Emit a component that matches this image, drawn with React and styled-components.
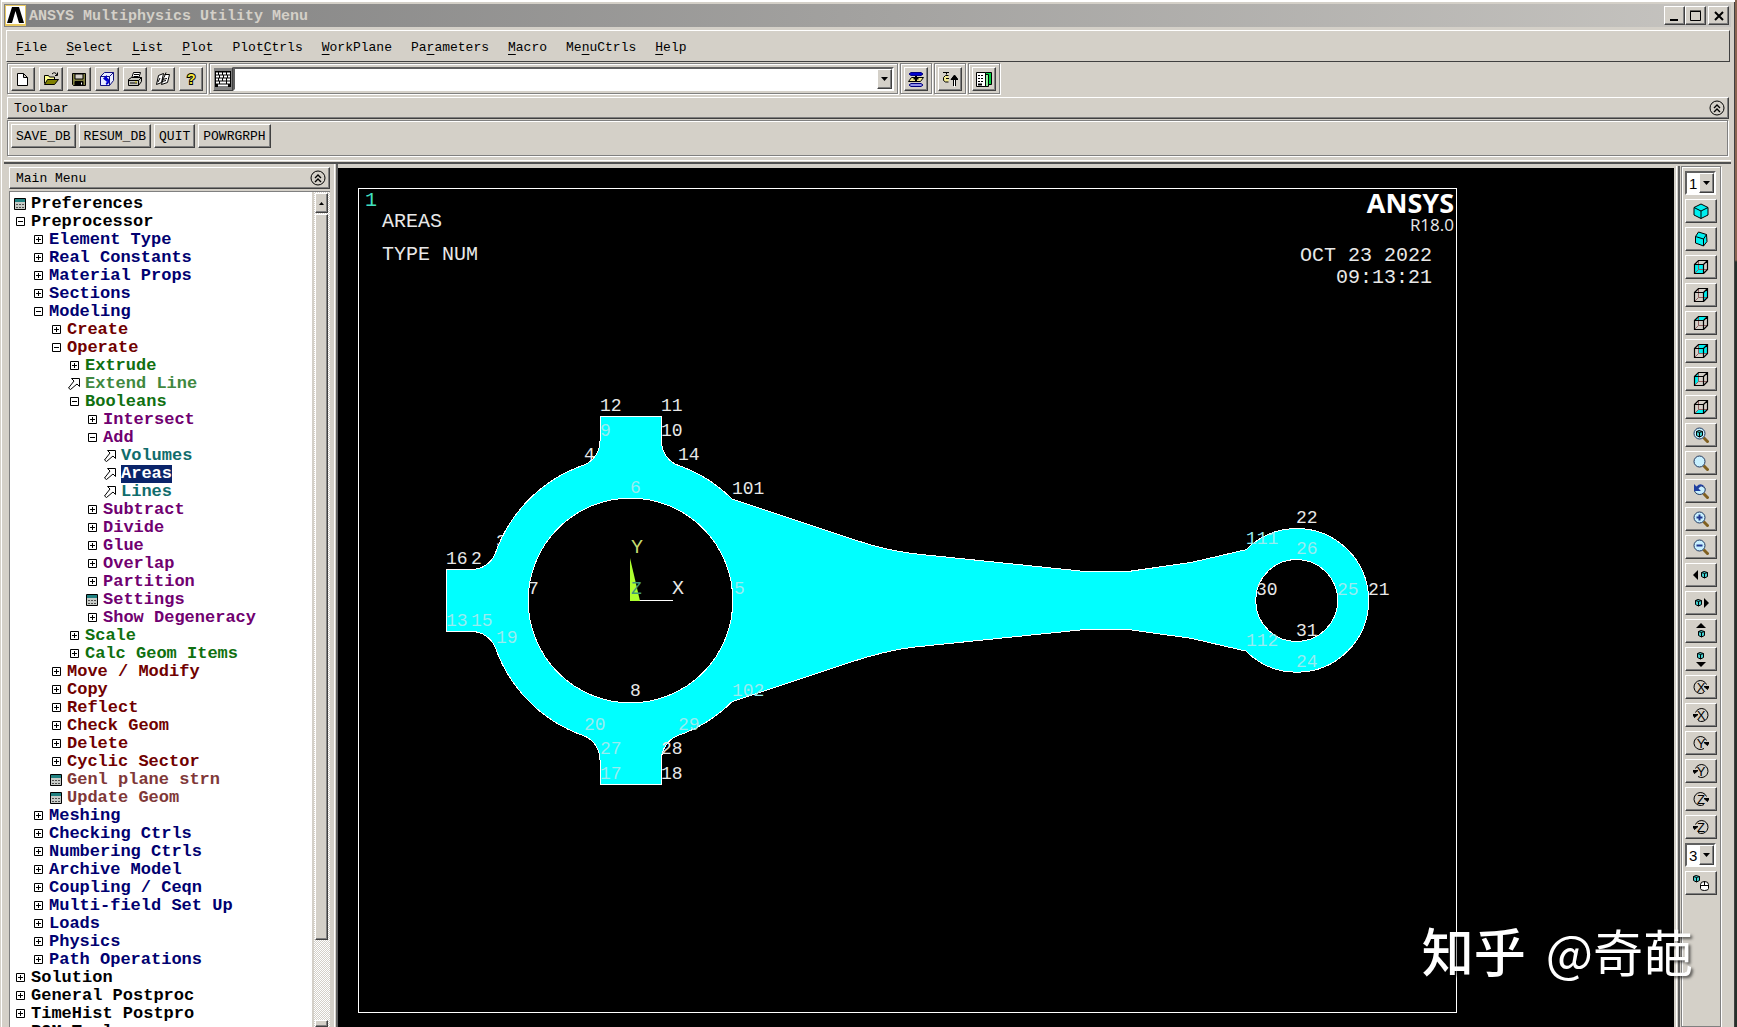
import { Fragment } from 'react'
import styled, { createGlobalStyle, css } from 'styled-components'

const GlobalStyle = createGlobalStyle`
  * {
    box-sizing: border-box;
  }
  body {
    margin: 0;
    overflow: hidden;
    background: linear-gradient(#8a6450 0, #8a6450 260px, #26302a 262px);
    font-family: "Liberation Mono", monospace;
    font-size: 13px;
    color: #000;
  }
  button, input, select {
    font: inherit;
    color: inherit;
    padding: 0;
    margin: 0;
    border-radius: 0;
  }
`

const raised = css`
  border: 1px solid;
  border-color: #fff #404040 #404040 #fff;
`
const raisedButton = css`
  background: #d4d0c8;
  border: 1px solid;
  border-color: #fff #404040 #404040 #fff;
  box-shadow: inset -1px -1px 0 #808080;
`
const groove = css`
  border: 1px solid #808080;
  box-shadow: inset 1px 1px 0 #fff, 1px 1px 0 #fff;
`
const sunken = css`
  border: 2px solid;
  border-color: #606060 #fff #fff #606060;
`

const Window = styled.div`
  display: flex;
  flex-direction: column;
  height: 100vh;
  margin-right: 2px;
  padding: 4px 4px 0;
  background: #d4d0c8;
  box-shadow: inset 1px 0 0 #d4d0c8, inset 2px 2px 0 #fff, inset -1px 0 0 #404040;
  overflow: hidden;
`
const TitleBar = styled.header`
  display: flex;
  flex: none;
  align-items: center;
  height: 23px;
  padding: 0 2px 0 1px;
  background: linear-gradient(90deg, #808080, #c6c4c0);
`
const Title = styled.h1`
  flex: 1;
  margin: 0 0 0 3px;
  padding-top: 2px;
  font-size: 15px;
  font-weight: bold;
  color: #d4d0c8;
`
const WindowButton = styled.button`
  ${raisedButton}
  display: flex;
  align-items: center;
  justify-content: center;
  width: 21px;
  height: 19px;
  margin-left: ${p => (p.$gap ? 2 : 0)}px;
`
const MenuBar = styled.nav`
  ${raised}
  display: flex;
  flex: none;
  align-items: center;
  gap: 19px;
  height: 32px;
  margin: 3px 1px 0 2px;
  padding: 2px 9px 0;
`
const MenuItem = styled.button`
  background: none;
  border: 0;
  u {
    text-underline-offset: 3px;
  }
`
const StandardRow = styled.div`
  display: flex;
  flex: none;
  gap: 2px;
  margin: 1px 2px 0 3px;
`
const Group = styled.div`
  ${groove}
  display: flex;
  gap: 4px;
  height: 31px;
  padding: 3px;
`
const CommandGroup = styled(Group)`
  flex: 0 0 40%;
  gap: 0;
`
const ToolButton = styled.button`
  ${raisedButton}
  display: flex;
  align-items: center;
  justify-content: center;
  width: 24px;
  height: 24px;
`
const KeyboardButton = styled(ToolButton)`
  width: 20px;
  background: #808080;
  border-color: #d4d0c8 #404040 #404040 #d4d0c8;
`
const Combo = styled.div`
  ${sunken}
  display: flex;
  flex: 1;
  height: 24px;
  background: #fff;
`
const CommandInput = styled.input`
  flex: 1;
  min-width: 0;
  border: 0;
  outline: 0;
  background: #fff;
`
const DropButton = styled.button`
  ${raisedButton}
  display: flex;
  align-items: center;
  justify-content: center;
  width: 15px;
`
const PanelTitle = styled.div`
  ${raised}
  box-shadow: inset -1px -1px 0 #808080;
  display: flex;
  flex: none;
  align-items: center;
  justify-content: space-between;
  height: 22px;
  padding: 0 3px 0 6px;
  h2 {
    margin: 0;
    font-size: 13px;
    font-weight: normal;
  }
`
const ToolbarTitle = styled(PanelTitle)`
  margin: 3px 2px 0 3px;
`
const FoldButton = styled.button`
  display: flex;
  border: 0;
  background: none;
`
const ToolbarPanel = styled.div`
  ${groove}
  display: flex;
  flex: none;
  gap: 3px;
  height: 36px;
  margin: 1px 3px 4px 3px;
  padding: 3px;
`
const MacroButton = styled.button`
  ${raisedButton}
  height: 24px;
  padding: 1px 4px 0;
`
const HSplit = styled.div`
  flex: none;
  height: 4px;
  border-top: 1px solid #fff;
  border-bottom: 2px solid #505050;
`
const Body = styled.div`
  display: flex;
  flex: 1;
  min-height: 0;
`
const Side = styled.aside`
  display: flex;
  flex-direction: column;
  flex: 0 0 330px;
  padding: 3px 4px 0 5px;
`
const TreeBox = styled.div`
  display: flex;
  flex: 1;
  min-height: 0;
  margin-top: 2px;
  border-top: 1px solid #808080;
  border-left: 1px solid #808080;
  background: #fff;
`
const Tree = styled.ul`
  flex: 1;
  margin: 0;
  padding: 3px 0 0 3px;
  list-style: none;
  overflow: hidden;
`
const TreeRow = styled.li`
  height: 18px;
  padding-left: ${p => p.$level * 18}px;
`
const TreeButton = styled.button`
  display: flex;
  align-items: center;
  height: 18px;
  border: 0;
  background: none;
  font-size: 17px;
  font-weight: bold;
  line-height: 18px;
  color: ${p => p.$color};
  white-space: nowrap;
  svg {
    flex: none;
    margin-right: 4px;
  }
  span {
    background: ${p => (p.$selected ? '#0a246a' : 'none')};
  }
`
const ScrollBar = styled.div`
  display: flex;
  flex-direction: column;
  width: 18px;
  padding: 1px 2px 0 1px;
  border-left: 2px solid #d4d0c8;
  background: repeating-conic-gradient(#d4d0c8 0 25%, #fff 0 50%) 0 0 / 2px 2px;
`
const ScrollButton = styled.button`
  ${raisedButton}
  flex: none;
  display: flex;
  align-items: center;
  justify-content: center;
  height: 20px;
`
const Thumb = styled.div`
  ${raisedButton}
  flex: 9;
  margin-top: 1px;
`
const Track = styled.div`
  flex: 1;
`
const ScrollEnd = styled(ScrollButton)`
  height: 7px;
`
const VSplit = styled.div`
  flex: none;
  width: 4px;
  border-left: 1px solid #fff;
  border-right: 2px solid #606060;
`
const Viewport = styled.main`
  display: flex;
  flex: 1;
  min-width: 0;
  margin-top: 4px;
  padding: 20px 217px 14px 20px;
  background: #000;
`
const Frame = styled.section`
  position: relative;
  display: flex;
  justify-content: space-between;
  flex: 1;
  border: 1px solid #fff;
  font-size: 20px;
  line-height: 22px;
  color: #e8e8e8;
`
const Part = styled.svg`
  position: absolute;
  inset: 0;
  width: 100%;
  height: 100%;
  font-size: 18px;
`
const Legend = styled.div`
  padding: 1px 0 0 6px;
  p {
    margin: 0 0 11px 17px;
  }
`
const WindowNumber = styled.div`
  height: 21px;
  color: #40e0c0;
`
const Stamp = styled.div`
  display: flex;
  flex-direction: column;
  align-items: flex-end;
  padding-right: 2px;
  font-family: "Open Sans", sans-serif;
  time {
    margin: 11px 22px 0 0;
    font-family: "Liberation Mono", monospace;
    line-height: 22px;
    text-align: right;
  }
`
const Brand = styled.strong`
  font-size: 27px;
  font-weight: 700;
  line-height: 27px;
  color: #fff;
`
const Release = styled.span`
  font-size: 17px;
  line-height: 18px;
`
const Rail = styled.aside`
  display: flex;
  flex: none;
  width: 57px;
  margin-top: 2px;
  padding-left: 2px;
`
const RailEdge = styled(VSplit)`
  margin-right: 1px;
`
const RailTools = styled.div`
  ${groove}
  display: flex;
  flex-direction: column;
  gap: 4px;
  padding: 4px 3px;
`
const ViewButton = styled(ToolButton)`
  flex: none;
  width: 32px;
`
const PickBox = styled.label`
  ${sunken}
  display: flex;
  flex: none;
  width: 31px;
  height: 24px;
  background: #fff;
`
const Pick = styled.select`
  flex: 1;
  width: 12px;
  border: 0;
  outline: 0;
  appearance: none;
  background: #fff;
  padding-left: 2px;
  font-family: "Liberation Sans", sans-serif;
  font-size: 15px;
`
const PickArrow = styled.span`
  ${raisedButton}
  display: flex;
  align-items: center;
  justify-content: center;
  width: 15px;
  pointer-events: none;
`
const Watermark = styled.div`
  position: fixed;
  right: 44px;
  bottom: 41px;
  display: flex;
  gap: 20px;
  font-family: "Noto Sans CJK SC", sans-serif;
  font-size: 50px;
  line-height: 72px;
  color: #fff;
  text-shadow: 2px 2px 3px rgba(0, 0, 0, .6);
  pointer-events: none;
  b {
    font-size: 52px;
    font-weight: 500;
  }
`

const Icon = ({ size = 16, children }) => (
  <svg width={size} height={size} viewBox={`0 0 ${size} ${size}`} fill="none" stroke="#000" aria-hidden="true">
    {children}
  </svg>
)

const Down = () => <svg width="7" height="4" aria-hidden="true"><path d="M0 0h7L3.5 4z" /></svg>
const Up = () => <svg width="5" height="3" aria-hidden="true"><path d="M0 3h5L2.5 0z" /></svg>

const Fold = ({ label }) => (
  <FoldButton aria-label={label}>
    <Icon>
      <circle cx="8" cy="8" r="7" />
      <path d="M5 8l3-3 3 3M5 12l3-3 3 3" strokeWidth="1.4" />
    </Icon>
  </FoldButton>
)

const fileTools = [
  ['New', <path d="M2.500 2.500h6l4 4v8h-10zM8.500 2.500v4h4" fill="#fff" />],
  ['Open', <>
    <path d="M1.500 12.500v-8h4l1 1.500h5v2.500" fill="#ffff90" />
    <path d="M1.500 13.500l3-5h11l-4 5z" fill="#808000" />
    <path d="M9 3q3-3 5 1M14.500 1.500V4.500H12" />
  </>],
  ['Save', <>
    <path d="M1.500 2.500h13v12h-12l-1-1z" fill="#808040" />
    <path d="M4 3h8v5H4z" fill="#d4d0c8" />
    <path d="M4 10.500h8v4H4z" fill="#000" />
    <path d="M10.500 11.500v2" stroke="#fff" />
  </>],
  ['Resume', <>
    <path d="M1.500 5.500l4-4h9v8l-4 5h-9zM1.500 5.500h9v9M10.500 5.500l4-4" fill="#e8ecff" stroke="#101080" />
    <path d="M7 13c3-1 3-5 0-5.500" stroke="#0000d0" strokeWidth="2" />
    <path d="M8 4L4 7.500 8 11z" fill="#0000d0" stroke="none" />
  </>],
  ['Print', <>
    <path d="M4.500 7.500l2-6h7l-2 6" fill="#fff" />
    <path d="M7 3.500h5M6.500 5.500h5" />
    <path d="M1.500 8.500l3-2h10v4l-3 4h-10z" fill="#c8c8c0" />
    <path d="M1.500 9.500h10l3-3M11.500 9.500v5M3 12h7" />
    <path d="M8 11h2" stroke="#d0c000" />
  </>],
  ['Report', <>
    <path d="M3.500 4.500l5-2-2 9-5 2zM9.500 3.500h5l-2 8-6 2 2-7" fill="#fff" />
    <path d="M5 7l-2 4M7 8.500l5-1M7 10.500l4-1M11 1.500l-2 5" />
  </>],
  ['Help', <text x="4" y="13" fontSize="14" fontWeight="bold" fontFamily="Liberation Sans" fill="#f4e840" strokeWidth="2" paintOrder="stroke">?</text>],
]

const keyboardIcon = (
  <>
    <path d="M0 0h16v16H0z" fill="#000" />
    <path
      d="M1 2.500h2M4 2.500h3M8 2.500h3M12 2.500h3M1 5.500h3M5 5.500h3M9 5.500h3M13 5.500h2M1 8.500h2M4 8.500h3M8 8.500h3M12 8.500h3M1 11.500h3M5 11.500h6M12 11.500h3M3 14.500h10"
      stroke="#fff"
      strokeWidth="2"
    />
  </>
)

const stateTools = [
  ['Raise Hidden', <>
    <path d="M3 1.500h10l2 1.500-2 1.500H3L1 3z" fill="#0000d0" stroke="#000080" />
    <path d="M3.500 6.500h12l-3 4H.500z" fill="#f0e890" />
    <path d="M8 5v5M5.500 7.500h5" strokeWidth="2" />
    <path d="M3 12.500h10l2 1.500-2 1.500H3L1 14z" fill="#9090e8" stroke="#000080" />
  </>],
  ['Reset Picking', <>
    <path d="M1 1.500h6M4.500 1.500v2" />
    <path d="M6.500 4.500h-3l-2 2v3l2 1.500h3" fill="#f0e890" />
    <path d="M4 7.500h3" />
    <path d="M12.500 5v10" strokeWidth="3" />
    <path d="M12.500 8v8" stroke="#fff" />
    <path d="M9 8.500L12.500 4 16 8.500z" fill="#000" />
  </>],
  ['Contact Manager', <>
    <path d="M9.500 1.500h6v12h-6z" fill="#00d040" />
    <path d="M8.500 3.500h4v12h-4z" fill="#90f0a0" />
    <path d="M.500 1.500h9v14h-9z" fill="#fff" />
    <path d="M2 4.500h2M5 4.500h2M2 7.500h2M5 7.500h2M2 10.500h2M5 10.500h2" />
    <path d="M2 13.500h4" strokeWidth="2" />
  </>],
]

const cyan = '#00f0f0'

// wire cube with one face filled
const Cube = ({ face }) => (
  <>
    <path d={face} fill={cyan} stroke="none" />
    <path d="M5.500 1.500v9h9M5.500 10.500l-4 4" stroke="#906060" strokeWidth="1" />
    <path d="M1.500 5.500h9v9h-9zM1.500 5.500l4-4h9v9l-4 4M10.500 5.500l4-4" strokeWidth="1.2" />
  </>
)

const Lens = ({ children }) => (
  <>
    <path d="M10.500 10.500l5 5" stroke="#806020" strokeWidth="3" />
    <circle cx="6.500" cy="6.500" r="5.500" fill="#c8f0ff" stroke="#203860" />
    {children}
  </>
)

const MiniCube = ({ x, y }) => (
  <g transform={`translate(${x} ${y})`}>
    <path d="M.500 1.500l2.500-1 3.500 1v4l-3 1.500-3-1.500z" fill="#40d0d0" />
    <path d="M.500 1.500l3 1 3-1M3.500 2.500V7" />
  </g>
)

const Spin = ({ axis, reverse }) => (
  <>
    <g transform={reverse ? 'matrix(-1 0 0 1 16 0)' : undefined}>
      <path d="M13.500 5.500A6.500 6.500 0 1 0 11 13.500" />
      <path d="M11 7.500h5l-1.500 3z" fill="#000" />
    </g>
    <text x="8" y="13" textAnchor="middle" fontSize="13" fontFamily="Liberation Sans" fill="#000" strokeWidth="0">{axis}</text>
  </>
)

const viewTools = [
  ['Isometric View', <>
    <path d="M1 4.500L8 1l7 3.500v7.500L8 15.500 1 12z" fill={cyan} />
    <path d="M1 4.500L8 8l7-3.500M8 8v7.500" />
  </>],
  ['Oblique View', <>
    <path d="M2.500 5.500l3-4.500 8 2.500.500 7-3.500 4.500-8-3z" fill={cyan} />
    <path d="M2.500 5.500l8 2.500 3-4.500M10.500 8v7" />
  </>],
  ['Front View', <Cube face="M1 5h10v10H1z" />],
  ['Right View', <Cube face="M10.500 5.500l4-4v9l-4 4z" />],
  ['Top View', <Cube face="M1.500 5.500l4-4h9l-4 4z" />],
  ['Back View', <Cube face="M5.500 1.500h9v9h-9z" />],
  ['Left View', <Cube face="M1.500 5.500l4-4v9l-4 4z" />],
  ['Bottom View', <Cube face="M1.500 14.500l4-4h9l-4 4z" />],
  ['Fit View', <Lens><MiniCube x={3} y={3} /></Lens>],
  ['Zoom Model', <Lens />],
  ['Back Up', <>
    <path d="M10.500 10.500l5 5" stroke="#806020" strokeWidth="3" />
    <path d="M1.500 8a5.500 5 0 0 0 10.500-3L9 3" fill="#c8f0ff" stroke="#203860" />
    <path d="M1 1v7h7L5.500 5.500Q8 2 12 4 8-1 3.500 3.500z" fill="#2040a0" stroke="none" />
  </>],
  ['Zoom In', <Lens><path d="M3.500 6.500h6M6.500 3.500v6" stroke="#203890" strokeWidth="2" /></Lens>],
  ['Zoom Out', <Lens><path d="M3.500 6.500h6" stroke="#203890" strokeWidth="2" /></Lens>],
  ['Pan Left', <><path d="M5 3v10L0 8z" fill="#000" stroke="none" /><MiniCube x={8} y={4} /></>],
  ['Pan Right', <><path d="M11 3v10l5-5z" fill="#000" stroke="none" /><MiniCube x={2} y={4} /></>],
  ['Pan Up', <><path d="M3 5h10L8 0z" fill="#000" stroke="none" /><MiniCube x={5} y={7} /></>],
  ['Pan Down', <><path d="M3 11h10l-5 5z" fill="#000" stroke="none" /><MiniCube x={4} y={1} /></>],
  ['Rotate +X', <Spin axis="X" />],
  ['Rotate -X', <Spin axis="X" reverse />],
  ['Rotate +Y', <Spin axis="Y" />],
  ['Rotate -Y', <Spin axis="Y" reverse />],
  ['Rotate +Z', <Spin axis="Z" />],
  ['Rotate -Z', <Spin axis="Z" reverse />],
]

// [before, hot key, after]
const menus = [
  ['', 'F', 'ile'],
  ['', 'S', 'elect'],
  ['', 'L', 'ist'],
  ['', 'P', 'lot'],
  ['Plot', 'C', 'trls'],
  ['', 'W', 'orkPlane'],
  ['Pa', 'r', 'ameters'],
  ['', 'M', 'acro'],
  ['Me', 'n', 'uCtrls'],
  ['', 'H', 'elp'],
]

const levelColors = ['#000', '#000070', '#700000', '#107010', '#700070', '#106c6c']

// [level, kind, label, color]
const tree = [
  [0, 'dialog', 'Preferences'],
  [0, 'minus', 'Preprocessor'],
  [1, 'plus', 'Element Type'],
  [1, 'plus', 'Real Constants'],
  [1, 'plus', 'Material Props'],
  [1, 'plus', 'Sections'],
  [1, 'minus', 'Modeling'],
  [2, 'plus', 'Create'],
  [2, 'minus', 'Operate'],
  [3, 'plus', 'Extrude'],
  [3, 'pick', 'Extend Line', '#408840'],
  [3, 'minus', 'Booleans'],
  [4, 'plus', 'Intersect'],
  [4, 'minus', 'Add'],
  [5, 'pick', 'Volumes'],
  [5, 'pick', 'Areas', '#fff'],
  [5, 'pick', 'Lines'],
  [4, 'plus', 'Subtract'],
  [4, 'plus', 'Divide'],
  [4, 'plus', 'Glue'],
  [4, 'plus', 'Overlap'],
  [4, 'plus', 'Partition'],
  [4, 'dialog', 'Settings'],
  [4, 'plus', 'Show Degeneracy'],
  [3, 'plus', 'Scale'],
  [3, 'plus', 'Calc Geom Items'],
  [2, 'plus', 'Move / Modify'],
  [2, 'plus', 'Copy'],
  [2, 'plus', 'Reflect'],
  [2, 'plus', 'Check Geom'],
  [2, 'plus', 'Delete'],
  [2, 'plus', 'Cyclic Sector'],
  [2, 'dialog', 'Genl plane strn', '#803838'],
  [2, 'dialog', 'Update Geom', '#803838'],
  [1, 'plus', 'Meshing'],
  [1, 'plus', 'Checking Ctrls'],
  [1, 'plus', 'Numbering Ctrls'],
  [1, 'plus', 'Archive Model'],
  [1, 'plus', 'Coupling / Ceqn'],
  [1, 'plus', 'Multi-field Set Up'],
  [1, 'plus', 'Loads'],
  [1, 'plus', 'Physics'],
  [1, 'plus', 'Path Operations'],
  [0, 'plus', 'Solution'],
  [0, 'plus', 'General Postproc'],
  [0, 'plus', 'TimeHist Postpro'],
  [0, 'plus', 'ROM Tool'],
]

const treeIcons = {
  plus: <path d="M3.500 2.500h8v8h-8zM5 6.500h5M7.500 4v5" />,
  minus: <path d="M3.500 2.500h8v8h-8zM5 6.500h5" />,
  dialog: <>
    <path d="M1.500 1.500h11v11h-11z" fill="#c8ccc8" />
    <path d="M2 3.500h10" stroke="#208080" strokeWidth="3" />
    <path d="M3 7.500h8M3 10.500h8" strokeDasharray="2 1" stroke="#505050" />
  </>,
  pick: <path d="M4.500 1.500h8v8L10 7l-6.500 5.500-2-1.500L7 4z" fill="#fff" />,
}

// keypoint labels in model pixels: x, baseline, text; pale ones lie on the area
const onBlack = [
  [600, 411, '12'], [661, 411, '11'], [661, 436, '10'], [584, 460, '4'], [678, 460, '14'],
  [732, 494, '101'], [446, 564, '16'], [471, 564, '2'], [528, 594, '7'], [630, 696, '8'],
  [661, 754, '28'], [661, 779, '18'], [1296, 523, '22'], [1256, 595, '30'], [1368, 595, '21'],
  [1296, 636, '31'],
]
const onArea = [
  [600, 436, '9'], [630, 493, '6'], [734, 594, '5'], [446, 626, '13'], [471, 626, '15'],
  [496, 643, '19'], [732, 696, '102'], [584, 730, '20'], [678, 730, '29'], [600, 754, '27'],
  [600, 779, '17'], [1246, 544, '111'], [1296, 554, '26'], [1337, 595, '25'], [1246, 646, '112'],
  [1296, 667, '24'],
]

const outline = `
  M600 416.500H661.500V441A25.700 25.700 0 0 0 678.400 465.400
  A143.300 143.300 0 0 1 732 499
  L855 540Q885 550 912 553.500L1085 571.500H1128L1191 562.500L1246 549.700
  A71.800 71.800 0 1 1 1246 651.100
  L1191 638.300L1128 629.500H1085L912 647.300Q885 651 855 660.800L732 701.800
  A143.300 143.300 0 0 1 678.400 735.400A25.700 25.700 0 0 0 661.500 759.700V784.500H600V759.700
  A25.700 25.700 0 0 0 582.800 735.400A143.300 143.300 0 0 1 495.600 648.200
  A25.700 25.700 0 0 0 471.300 631.500H446.500V569.500H471.300
  A25.700 25.700 0 0 0 495.600 552.600A143.300 143.300 0 0 1 582.800 465.400
  A25.700 25.700 0 0 0 600 441Z`

function ConnectingRod() {
  return (
    <Part viewBox="359 189 1097 823" preserveAspectRatio="xMinYMin meet">
      <g fill="#e8e8e8">
        <text x="496" y="547">3</text>
      </g>
      <g stroke="#fff" shapeRendering="crispEdges">
        <path d={outline} fill="#0ff" />
        <circle cx="630.500" cy="600.500" r="102.300" fill="#000" />
        <circle cx="1296.700" cy="600.500" r="41" fill="#000" />
        <path d="M630 600.500H673" />
      </g>
      <path d="M630 558V601H640z" fill="#adff2f" />
      <g fill="#e8e8e8">
        {onBlack.map(([x, y, t]) => <text key={t} x={x} y={y}>{t}</text>)}
      </g>
      <g fill="#98ecf0">
        {onArea.map(([x, y, t]) => <text key={t} x={x} y={y}>{t}</text>)}
      </g>
      <g fontSize="20">
        <text x="631" y="553" fill="#c4dc70">Y</text>
        <text x="631" y="594" fill="#409878" fontSize="18">Z</text>
        <text x="672" y="594" fill="#e8e8e8">X</text>
      </g>
    </Part>
  )
}

function NumberPick({ label, value }) {
  return (
    <PickBox>
      <Pick aria-label={label} defaultValue={value}>
        {[1, 2, 3, 4, 5].map(n => <option key={n}>{n}</option>)}
      </Pick>
      <PickArrow><Down /></PickArrow>
    </PickBox>
  )
}

export default function App() {
  return (
    <Fragment>
      <GlobalStyle />
      <Window>
        <TitleBar>
          <svg width="21" height="21" aria-hidden="true">
            <path d="M0 0h21v21H0z" fill="#e8c860" />
            <path d="M1 1h19v18H1z" fill="#fff" />
            <path d="M2 18L7 2h7l5 16h-5L10.500 6 7 18z" />
          </svg>
          <Title>ANSYS Multiphysics Utility Menu</Title>
          <WindowButton aria-label="Minimize">
            <Icon><path d="M3 12h8" strokeWidth="2" /></Icon>
          </WindowButton>
          <WindowButton aria-label="Maximize">
            <Icon><path d="M2.500 3.500h10v9h-10zM2 3h11" /></Icon>
          </WindowButton>
          <WindowButton aria-label="Close" $gap>
            <Icon><path d="M4 4l8 8M12 4l-8 8" strokeWidth="2" /></Icon>
          </WindowButton>
        </TitleBar>
        <MenuBar>
          {menus.map(([a, key, b]) => <MenuItem key={a + key + b}>{a}<u>{key}</u>{b}</MenuItem>)}
        </MenuBar>
        <StandardRow>
          <Group>
            {fileTools.map(([label, icon]) => (
              <ToolButton key={label} aria-label={label}><Icon>{icon}</Icon></ToolButton>
            ))}
          </Group>
          <CommandGroup>
            <KeyboardButton aria-label="Command window"><Icon>{keyboardIcon}</Icon></KeyboardButton>
            <Combo>
              <CommandInput aria-label="Command" />
              <DropButton aria-label="Command history"><Down /></DropButton>
            </Combo>
          </CommandGroup>
          {stateTools.map(([label, icon]) => (
            <Group key={label}>
              <ToolButton aria-label={label}><Icon>{icon}</Icon></ToolButton>
            </Group>
          ))}
        </StandardRow>
        <ToolbarTitle>
          <h2>Toolbar</h2>
          <Fold label="Fold toolbar" />
        </ToolbarTitle>
        <ToolbarPanel>
          {['SAVE_DB', 'RESUM_DB', 'QUIT', 'POWRGRPH'].map(t => <MacroButton key={t}>{t}</MacroButton>)}
        </ToolbarPanel>
        <HSplit />
        <Body>
          <Side>
            <PanelTitle>
              <h2>Main Menu</h2>
              <Fold label="Fold main menu" />
            </PanelTitle>
            <TreeBox>
              <Tree>
                {tree.map(([level, kind, label, color]) => (
                  <TreeRow key={label} $level={level}>
                    <TreeButton $color={color || levelColors[level]} $selected={label === 'Areas'}>
                      <Icon size={14}>{treeIcons[kind]}</Icon>
                      <span>{label}</span>
                    </TreeButton>
                  </TreeRow>
                ))}
              </Tree>
              <ScrollBar>
                <ScrollButton aria-label="Scroll up"><Up /></ScrollButton>
                <Thumb />
                <Track />
                <ScrollEnd aria-label="Scroll down" />
              </ScrollBar>
            </TreeBox>
          </Side>
          <VSplit />
          <Viewport>
            <Frame>
              <ConnectingRod />
              <Legend>
                <WindowNumber>1</WindowNumber>
                <p>AREAS</p>
                <p>TYPE NUM</p>
              </Legend>
              <Stamp>
                <Brand>ANSYS</Brand>
                <Release>R18.0</Release>
                <time>OCT 23 2022<br />09:13:21</time>
              </Stamp>
            </Frame>
          </Viewport>
          <Rail>
            <RailEdge />
            <RailTools>
              <NumberPick label="Active window" value="1" />
              {viewTools.map(([label, icon]) => (
                <ViewButton key={label} aria-label={label}><Icon>{icon}</Icon></ViewButton>
              ))}
              <NumberPick label="Rate" value="3" />
              <ViewButton aria-label="Dynamic mode">
                <Icon>
                  <MiniCube x={0} y={0} />
                  <path d="M7.500 9.500q0-3 4-3t4 3v4q0 2-4 2t-4-2zM7.500 10.500h8M11.500 6v4" fill="#fff" />
                </Icon>
              </ViewButton>
            </RailTools>
          </Rail>
        </Body>
      </Window>
      <Watermark><b>知乎</b><span>@奇葩</span></Watermark>
    </Fragment>
  )
}
